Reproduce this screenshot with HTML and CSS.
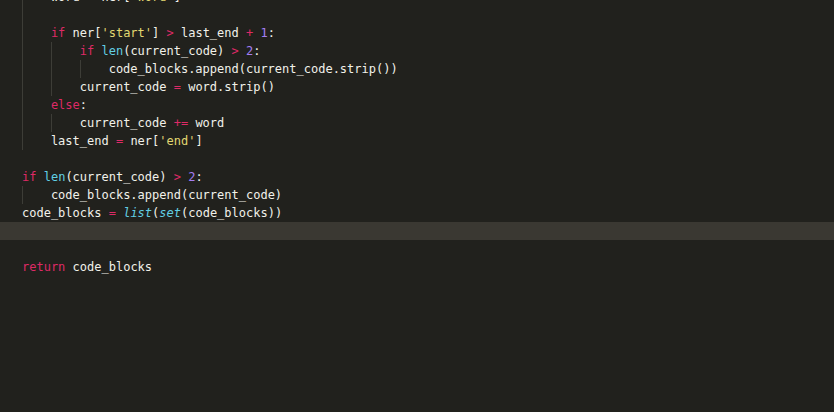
FILE: index.html
```html
<!DOCTYPE html>
<html lang="en">
<head>
<meta charset="utf-8">
<title>code</title>
<link rel="stylesheet" href="styles.css">
</head>
<body>
<div class="editor">
  <div class="code">
    <div class="line"><span class="g"></span>word = ner[<span class="s">'word'</span>]</div>
    <div class="line"><span class="g"></span></div>
    <div class="line"><span class="g"></span><span class="k">if</span> ner[<span class="s">'start'</span>] <span class="k">&gt;</span> last_end <span class="k">+</span> <span class="n">1</span>:</div>
    <div class="line"><span class="g"></span><span class="g"></span><span class="k">if</span> <span class="b">len</span>(current_code) <span class="k">&gt;</span> <span class="n">2</span>:</div>
    <div class="line"><span class="g"></span><span class="g"></span><span class="g"></span>code_blocks.append(current_code.strip())</div>
    <div class="line"><span class="g"></span><span class="g"></span>current_code <span class="k">=</span> word.strip()</div>
    <div class="line"><span class="g"></span><span class="k">else</span>:</div>
    <div class="line"><span class="g"></span><span class="g"></span>current_code <span class="k">+=</span> word</div>
    <div class="line"><span class="g"></span>last_end <span class="k">=</span> ner[<span class="s">'end'</span>]</div>
    <div class="line"></div>
    <div class="line"><span class="k">if</span> <span class="b">len</span>(current_code) <span class="k">&gt;</span> <span class="n">2</span>:</div>
    <div class="line"><span class="g"></span>code_blocks.append(current_code)</div>
    <div class="line">code_blocks <span class="k">=</span> <span class="bi">list</span>(<span class="bi">set</span>(code_blocks))</div>
    <div class="line current"></div>
    <div class="line"></div>
    <div class="line"><span class="k">return</span> code_blocks</div>
  </div>
</div>
</body>
</html>
```

FILE: styles.css
```css
html, body {
  margin: 0;
  padding: 0;
  background: #21211d;
  overflow: hidden;
}

.editor {
  width: 834px;
  height: 412px;
  background: #21211d;
  overflow: hidden;
}

.code {
  margin-top: -12px;
  display: flex;
  flex-direction: column;
  font-family: "DejaVu Sans Mono", monospace;
  font-size: 12px;
  color: #f1f1ea;
}

.line {
  height: 18px;
  line-height: 18px;
  padding-left: 22px;
  white-space: pre;
  display: block;
}

.line.current {
  background: #3a3832;
}

.g {
  display: inline-block;
  width: 4ch;
  height: 18px;
  box-sizing: border-box;
  border-left: 1px solid #3d3d37;
  vertical-align: top;
}

.k { color: #de2a66; }
.s { color: #e2d872; }
.n { color: #a47ef2; }
.b { color: #62cfe4; }
.bi { color: #62cfe4; font-style: italic; }
```
